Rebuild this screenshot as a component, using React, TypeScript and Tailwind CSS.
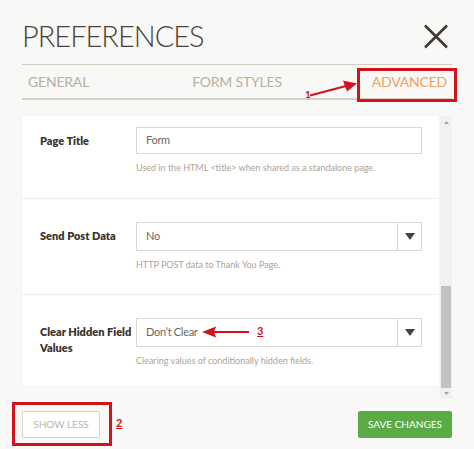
import { ReactNode } from 'react'

const RED = '#d3121b'

function Caret() {
    return (
        <svg width="10" height="7" viewBox="0 0 10 7">
            <path d="M0 0 H10 L5 7 Z" fill="#4a423a" />
        </svg>
    )
}

function Select({ value }: { value: string }) {
    return (
        <div className="flex h-[29px] w-[286px] border border-[#ddd7cf] bg-white">
            <div className="flex flex-1 items-center pl-[9px] text-[11px] tracking-[-0.3px] text-[#6f665c]">{value}</div>
            <div className="flex w-[24px] items-center justify-center border-l border-[#ddd7cf]">
                <Caret />
            </div>
        </div>
    )
}

function Row({ label, helper, field, className }: { label: ReactNode; helper: string; field: ReactNode; className: string }) {
    return (
        <div className={`flex ${className}`}>
            <div className="w-[114px] pl-[18px] pr-[4px] pt-[6px] text-[11px] font-extrabold leading-[16px] text-[#3b352f]">{label}</div>
            <div className="flex flex-col">
                {field}
                <p className="mt-[7px] text-[9px] leading-[14px] text-[#aaa399]">{helper}</p>
            </div>
        </div>
    )
}

export default function App() {
    return (
        <div className="relative h-[449px] w-[474px] overflow-hidden bg-[#f8f8f7] px-[22px] font-['Lato',sans-serif]">
            {/* header */}
            <div className="flex items-center justify-between border-b border-[#d4ccc1] pb-[10px] pt-[18px]">
                <h1 className="text-[29px] font-light leading-[36px] tracking-[-1px] text-[#4a4238]">PREFERENCES</h1>
                <svg width="26" height="25" viewBox="0 0 26 25" className="mr-[3px]">
                    <path d="M2 1.5 L24 23.5 M24 1.5 L2 23.5" stroke="#3f3932" strokeWidth="2.6" />
                </svg>
            </div>

            {/* tabs */}
            <div className="grid h-[35px] grid-cols-3 items-center border-b-2 border-[#d8d0c5] text-[14px] tracking-[-0.2px]">
                <span className="pl-[6px] text-[#b8afa3]">GENERAL</span>
                <span className="text-center text-[#b8afa3]">FORM STYLES</span>
                <span className="pr-[5px] text-right text-[#efa25f]">ADVANCED</span>
            </div>

            {/* panel */}
            <div className="mt-[16px] flex h-[282px]">
                <div className="flex h-[270px] w-[418px] flex-col bg-white shadow-[0_0_2px_rgba(0,0,0,0.06)]">
                    <Row
                        className="h-[83px] border-b border-[#eeeeee] pt-[11px]"
                        label="Page Title"
                        helper="Used in the HTML <title> when shared as a standalone page."
                        field={
                            <div className="flex h-[27px] w-[286px] items-center border border-[#ddd7cf] pl-[9px] text-[11px] tracking-[-0.3px] text-[#6f665c]">
                                Form
                            </div>
                        }
                    />
                    <Row
                        className="h-[96px] border-b border-[#eeeeee] pt-[23px]"
                        label="Send Post Data"
                        helper="HTTP POST data to Thank You Page."
                        field={<Select value="No" />}
                    />
                    <Row
                        className="flex-1 pt-[23px]"
                        label={<>Clear Hidden Field<br />Values</>}
                        helper="Clearing values of conditionally hidden fields."
                        field={<Select value="Don’t Clear" />}
                    />
                </div>
                <div className="ml-[1px] flex h-[282px] w-[12px] flex-col bg-[#f1f1f1]">
                    <div className="flex h-[12px] items-center justify-center">
                        <svg width="5" height="3" viewBox="0 0 5 3"><path d="M0 3 L2.5 0 L5 3 Z" fill="#a3a3a3" /></svg>
                    </div>
                    <div className="flex-1" />
                    <div className="mx-[1px] h-[102px] bg-[#c2c2c2]" />
                    <div className="flex h-[10px] items-center justify-center">
                        <svg width="5" height="3" viewBox="0 0 5 3"><path d="M0 0 L5 0 L2.5 3 Z" fill="#a3a3a3" /></svg>
                    </div>
                </div>
            </div>

            {/* footer */}
            <div className="mt-[13px] flex items-center justify-between">
                <button className="h-[27px] w-[78px] rounded-[2px] border border-[#d9d1c6] bg-white text-[10px] text-[#bdb4a8]">
                    SHOW LESS
                </button>
                <button className="h-[27px] w-[94px] rounded-[2px] bg-[#5aab47] text-[10px] text-white">
                    SAVE CHANGES
                </button>
            </div>

            {/* annotations */}
            <div className="absolute left-[357px] top-[68px] h-[34px] w-[100px] border-[3px]" style={{ borderColor: RED }} />
            <svg className="absolute left-[300px] top-[78px]" width="60" height="24" viewBox="0 0 60 24">
                <path d="M10 17.5 L46 8" stroke={RED} strokeWidth="2.2" />
                <path d="M57 5.5 L43 2.5 L47 13.5 Z" fill={RED} />
            </svg>
            <span className="absolute left-[305px] top-[88px] text-[10px] font-bold leading-[12px]" style={{ color: RED }}>1</span>

            <svg className="absolute left-[201px] top-[325px]" width="52" height="14" viewBox="0 0 52 14">
                <path d="M12 7 L48 7" stroke={RED} strokeWidth="2.2" />
                <path d="M1 7 L15 1.5 L13 7 L15 12.5 Z" fill={RED} />
            </svg>
            <span className="absolute left-[257px] top-[324px] text-[11px] font-bold leading-[14px] underline" style={{ color: RED }}>3</span>

            <div className="absolute left-[12px] top-[402px] h-[44px] w-[100px] border-[3px]" style={{ borderColor: RED }} />
            <span className="absolute left-[116px] top-[416px] text-[11px] font-bold leading-[14px] underline" style={{ color: RED }}>2</span>
        </div>
    )
}
